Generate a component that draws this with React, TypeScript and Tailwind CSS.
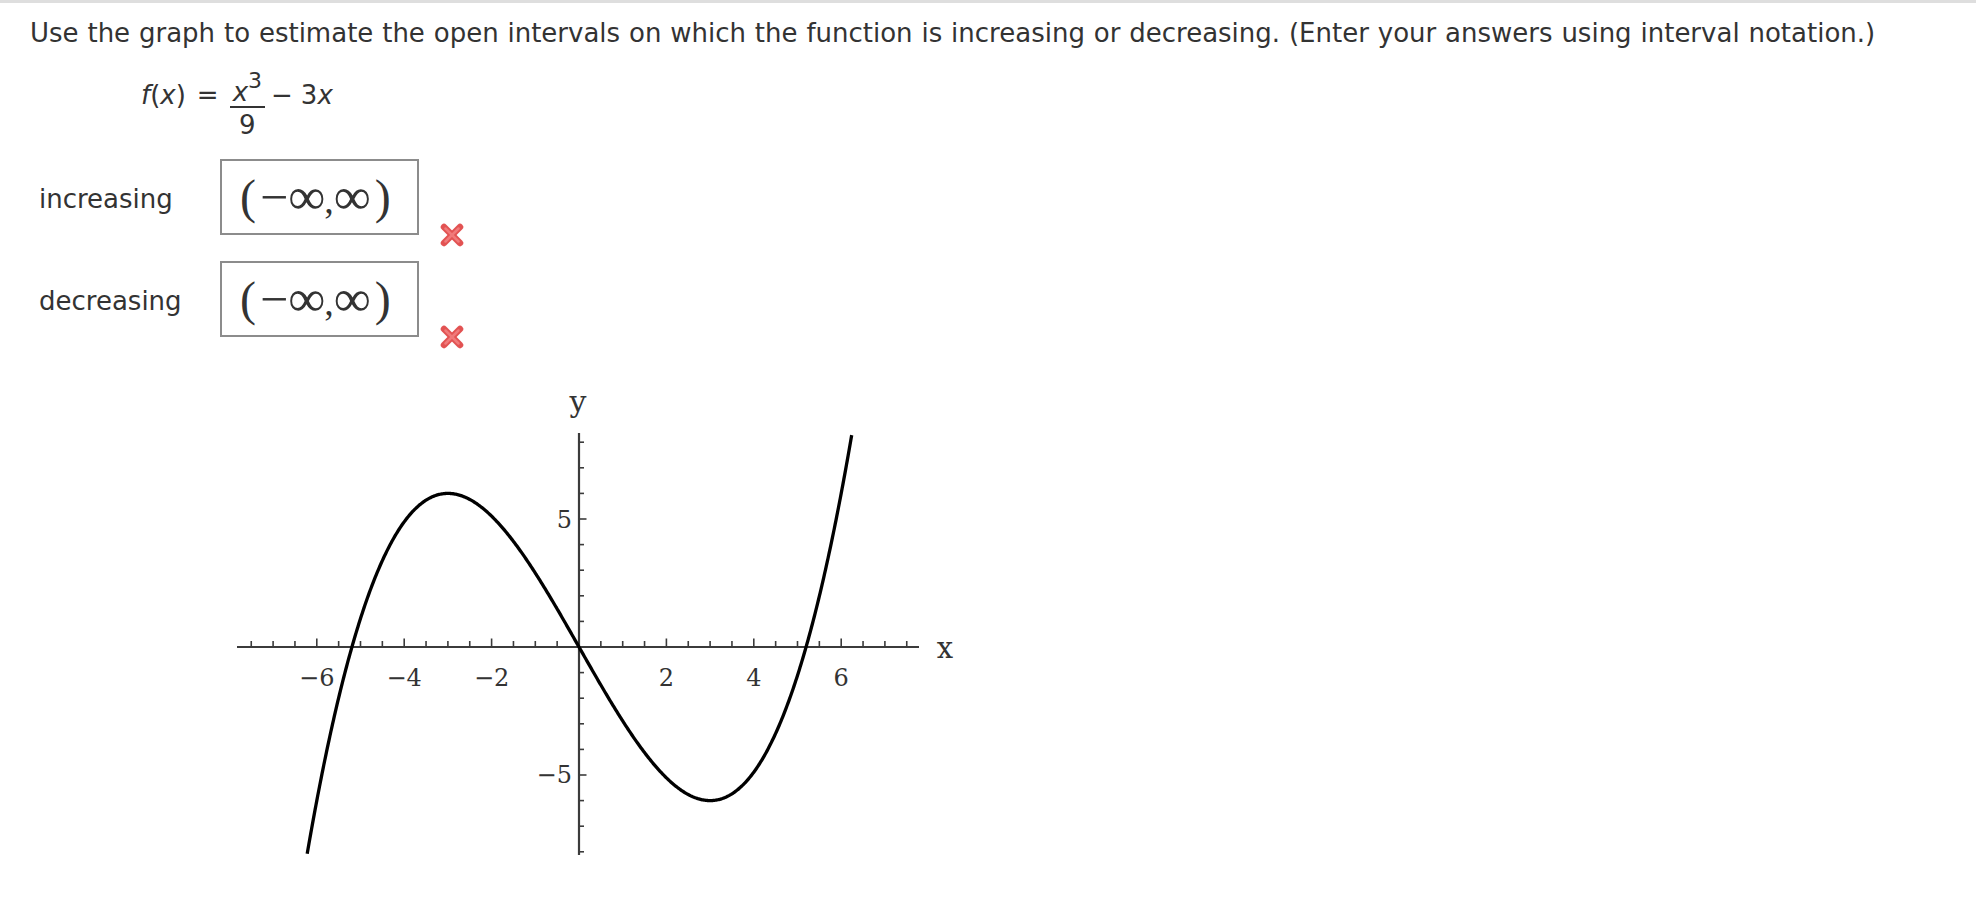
const X0 = 359;
const Y0 = 267;
const SX = 43.7;
const SY = 25.6;

const f = (x: number) => (x * x * x) / 9 - 3 * x;

const curve = (() => {
  const pts: string[] = [];
  for (let t = -6.22; t <= 6.25; t += 0.02) {
    pts.push(`${(X0 + t * SX).toFixed(2)},${(Y0 - f(t) * SY).toFixed(2)}`);
  }
  return 'M' + pts.join(' L');
})();

const RedX = () => (
  <svg width="28" height="28" viewBox="0 0 28 28" className="shrink-0">
    <g strokeLinecap="round">
      <line x1="6" y1="6" x2="22" y2="22" stroke="#e25252" strokeWidth="6.5" />
      <line x1="22" y1="6" x2="6" y2="22" stroke="#e25252" strokeWidth="6.5" />
      <line x1="7.5" y1="7.5" x2="20.5" y2="20.5" stroke="#f07a7a" strokeWidth="2.5" />
      <line x1="20.5" y1="7.5" x2="7.5" y2="20.5" stroke="#f07a7a" strokeWidth="2.5" />
    </g>
  </svg>
);

const Answer = () => (
  <div className="w-[199px] h-[76px] border-2 border-[#8c8c8c] flex items-center pl-[18px] font-['Liberation_Serif'] text-[#333] leading-none">
    <span className="text-[48px] font-light">(</span>
    <span className="text-[50px] ml-[4px]">−</span>
    <span className="text-[52px]">∞</span>
    <span className="text-[38px] -ml-[1px] relative top-[3px]">,</span>
    <span className="text-[52px]">∞</span>
    <span className="text-[48px] ml-[4px]">)</span>
  </div>
);

const Row = ({ label, first }: { label: string; first?: boolean }) => (
  <div className={`flex h-[76px] ${first ? 'mt-[23px]' : 'mt-[26px]'}`}>
    <div className="w-[220px] pl-[39px] flex items-center pt-[4px]">{label}</div>
    <Answer />
    <div className="ml-[19px] mt-[62px]">
      <RedX />
    </div>
  </div>
);

const Graph = () => {
  const xt: number[] = [];
  for (let k = -15; k <= 15; k++) if (k !== 0) xt.push(k);
  const yt: number[] = [];
  for (let k = -8; k <= 8; k++) if (k !== 0) yt.push(k);
  return (
    <svg width="760" height="490" className="ml-[220px] mt-[43px] block font-['DejaVu_Serif']">
      <g stroke="#3b3b3b">
        <line x1="17" y1={Y0} x2="699" y2={Y0} strokeWidth="2.2" />
        <line x1={X0} y1="53" x2={X0} y2="475" strokeWidth="2.2" />
        {xt.map((k) => {
          const x = X0 + (k / 2) * SX;
          const len = k % 4 === 0 ? 8.5 : 6;
          return <line key={k} x1={x} y1={Y0} x2={x} y2={Y0 - len} strokeWidth="1.6" />;
        })}
        {yt.map((k) => {
          const y = Y0 - k * SY;
          const len = Math.abs(k) === 5 ? 7.5 : 5;
          return <line key={k} x1={X0} y1={y} x2={X0 + len} y2={y} strokeWidth="1.6" />;
        })}
      </g>
      <path d={curve} fill="none" stroke="#000" strokeWidth="3.3" strokeLinejoin="round" />
      <g fill="#333" fontSize="24" textAnchor="middle" dominantBaseline="central">
        {[-6, -4, -2, 2, 4, 6].map((t) => (
          <text key={t} x={X0 + t * SX} y={298}>
            {t < 0 ? `−${-t}` : t}
          </text>
        ))}
        <text x={352} y={140} textAnchor="end">5</text>
        <text x={352} y={395} textAnchor="end">−5</text>
        <text x={358} y={21} fontSize="30">y</text>
        <text x={725} y={268} fontSize="29">x</text>
      </g>
    </svg>
  );
};

export default function App() {
  return (
    <div className="w-[1976px] h-[900px] bg-white border-t-[3px] border-[#dedede] font-['DejaVu_Sans'] text-[26px] text-[#333] overflow-hidden">
      <div className="pl-[30px] pt-[14px] leading-[32px] whitespace-nowrap [word-spacing:0.6px]">
        Use the graph to estimate the open intervals on which the function is increasing or decreasing. (Enter your answers using interval notation.)
      </div>
      <div className="flex items-start ml-[141px] mt-[17px] h-[70px]">
        <div className="mt-[13px] leading-[32px]">
          <i>f</i>(<i>x</i>)
        </div>
        <div className="mt-[13px] leading-[32px] ml-[11px]">=</div>
        <div className="flex flex-col items-stretch mt-[6px] ml-[11px]">
          <div className="h-[34px] leading-[40px] whitespace-nowrap px-[3px]">
            <i>x</i>
            <span className="text-[22px] relative -top-[13px]">3</span>
          </div>
          <div className="w-full h-[2px] bg-[#333]" />
          <div className="h-[32px] leading-[34px] text-center">9</div>
        </div>
        <div className="mt-[13px] leading-[32px] ml-[6px]">−</div>
        <div className="mt-[13px] leading-[32px] ml-[8px]">
          3<i>x</i>
        </div>
      </div>
      <Row label="increasing" first />
      <Row label="decreasing" />
      <Graph />
    </div>
  );
}
